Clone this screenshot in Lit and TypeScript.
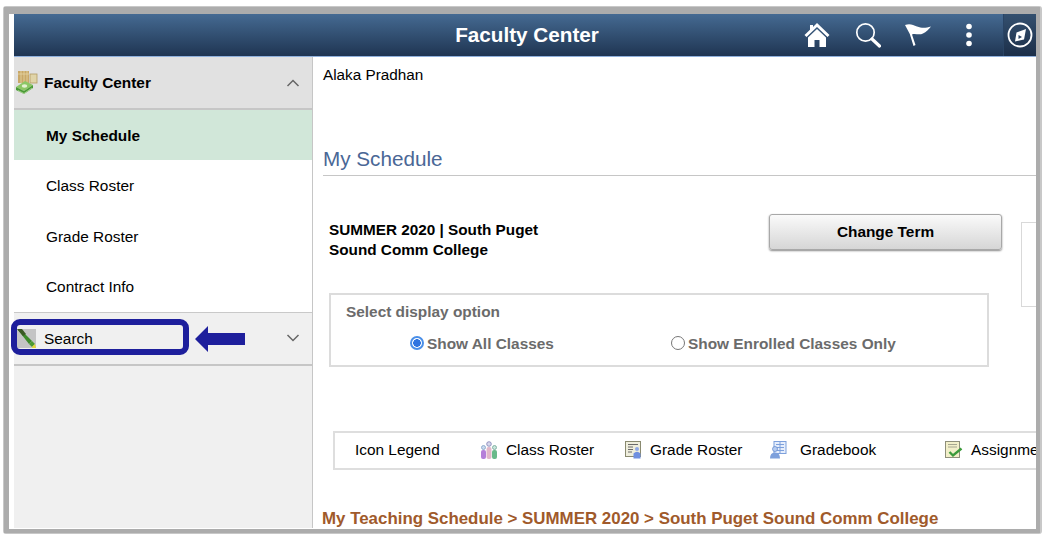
import { LitElement, html, css } from "lit";
import { customElement } from "lit/decorators.js";

const homeIcon = html`<svg width="26" height="26" viewBox="0 0 26 26"><path d="M13 1 L25.500 13 L23.500 15 L13 5 L2.500 15 L.5 13 L6 7.700 V3 H9 V5 Z" fill="#fff"/><path d="M13 7 L22 15.500 V25 H15.500 V18 H10.500 V25 H4 V15.500 Z" fill="#fff"/></svg>`;
const searchIcon = html`<svg width="26" height="26" viewBox="0 0 26 26" fill="none" stroke="#fff"><circle cx="10.500" cy="10.500" r="8.700" stroke-width="1.700"/><path d="M17 17 L24.500 24" stroke-width="3.200" stroke-linecap="round"/></svg>`;
const flagIcon = html`<svg width="26" height="24" viewBox="0 0 26 24"><path d="M0 2 C5 0 8 2 12 3.500 C17 5.500 21 5 26 3.500 C24 6 21 9 18 10.500 C14 12.500 10 10 7 11.500 L10.500 22 L8.500 23 L4.800 11 Z" fill="#fff"/></svg>`;
const dotsIcon = html`<svg width="8" height="24" viewBox="0 0 8 24" fill="#fff"><circle cx="4" cy="3.500" r="2.800"/><circle cx="4" cy="12" r="2.800"/><circle cx="4" cy="20.500" r="2.800"/></svg>`;
const navIcon = html`<svg width="26" height="26" viewBox="0 0 26 26"><circle cx="13" cy="13" r="11.500" fill="none" stroke="#fff" stroke-width="1.800"/><path d="M19 7 L17 17.500 L8 19.500 L9.500 10.500 Z" fill="#fff"/><path d="M11.500 13 L15 15 L11.500 17 Z" fill="#2b4464"/></svg>`;
const chevUp = html`<svg width="14" height="8" viewBox="0 0 14 8" fill="none" stroke="#666" stroke-width="1.500"><path d="M1.500 7 L7 1.500 L12.500 7"/></svg>`;
const chevDown = html`<svg width="14" height="8" viewBox="0 0 14 8" fill="none" stroke="#666" stroke-width="1.500"><path d="M1.500 1 L7 6.500 L12.500 1"/></svg>`;
const facultyIcon = html`<svg width="23" height="24" viewBox="0 0 23 24"><rect x="3" y="0" width="11" height="12" fill="#c9a868"/><path d="M3 3 H14 M6 0 V12 M9 0 V12 M12 0 V12" stroke="#e6d5a5" stroke-width=".8"/><rect x="15" y="3" width="7" height="9" fill="#e0d4a8" stroke="#b39c63" stroke-width=".8"/><path d="M1 16 L10 10 L18 14 L9 20 Z" fill="#8cc765"/><path d="M1 16 L9 20 L18 14 V17 L9 23 L1 19 Z" fill="#4a9a36"/><ellipse cx="9.500" cy="15" rx="2.800" ry="1.800" fill="#e4f2d2"/><path d="M3 19.500 L9 22.500 L17 17" stroke="#c8e6b0" fill="none" stroke-width=".7"/></svg>`;
const searchSideIcon = html`<svg width="20" height="19" viewBox="0 0 20 19"><rect width="19" height="19" fill="#c4c4c4"/><path d="M1 1 L3 0 L15 12 L12 15 Z" fill="#3d8a2a"/><path d="M0 0 L5 0 L9 5 L6 7 Z" fill="#3b5a24"/><path d="M12 15 L15 12 L18 15 L15 18 Z" fill="#4d9a30"/><path d="M15 18 L18 15 L19 19 H15 Z" fill="#e6d83a"/></svg>`;
const rosterIcon = html`<svg width="18" height="18" viewBox="0 0 18 18"><circle cx="9" cy="3" r="2.300" fill="#d8d8ec" stroke="#7f7fb5" stroke-width=".8"/><rect x="6.500" y="6" width="5" height="12" rx="2" fill="#e2b7c9"/><circle cx="3.500" cy="6.500" r="2" fill="#c9d9ee" stroke="#7f9fc5" stroke-width=".8"/><rect x="1" y="9" width="5" height="9" rx="2" fill="#b57fd9"/><circle cx="14.500" cy="6.500" r="2" fill="#c9e6dc" stroke="#6fa595" stroke-width=".8"/><rect x="12" y="9" width="5" height="9" rx="2" fill="#69b98a"/></svg>`;
const gradeIcon = html`<svg width="18" height="18" viewBox="0 0 18 18"><rect x=".5" y=".5" width="15" height="15" fill="#efeedd" stroke="#8a8a70"/><path d="M3 3.500 H13 M3 6 H8 M3 8.500 H8 M3 11 H7" stroke="#6a6a6a"/><circle cx="12" cy="8" r="2" fill="#8fa8e6"/><path d="M8.500 17.500 V12.500 Q12 9 15.500 12.500 V17.500 Z" fill="#6f8fe0"/></svg>`;
const bookIcon = html`<svg width="18" height="18" viewBox="0 0 18 18"><rect x="5" y=".5" width="12" height="12" fill="#e6eefc" stroke="#7da0dc"/><path d="M7 3.500 H15 M7 6.500 H15 M7 9.500 H15 M11 1 V12" stroke="#7da0dc"/><circle cx="6" cy="8" r="2.500" fill="#b7cdf2" stroke="#5f86cc" stroke-width=".7"/><path d="M1 17.500 Q1 11.500 6 11.500 Q11 11.500 11 17.500 Z" fill="#7da0dc"/></svg>`;
const assignIcon = html`<svg width="18" height="18" viewBox="0 0 18 18"><rect x=".5" y=".5" width="14" height="16" fill="#f2efc9" stroke="#8f8f7a"/><path d="M3 3.500 H12 M3 6 H12" stroke="#a6a690"/><path d="M4.500 11 L8 14.500 L16.500 7.500" fill="none" stroke="#3c9a3c" stroke-width="2.400"/></svg>`;

@customElement("app-root")
export class AppRoot extends LitElement {
  static styles = css`
    :host { display: block; width: 1050px; height: 540px; background: #fff; font-family: "Liberation Sans", Arial, sans-serif; color: #000; overflow: hidden; }
    * { box-sizing: border-box; }
    .outer { position: relative; margin: 6px 8px 6px 3px; height: 528px; border: 1px solid #c8c8c8; border-right-width: 2px; border-radius: 3px; background: #fff; }
    .frame { height: 100%; border-style: solid; border-color: #acacac; border-width: 7px 4px 4px 5px; background: #fff; padding: 0 0 1px 5px; display: flex; flex-direction: column; }
    .header { height: 42px; flex: none; background: linear-gradient(#456a92, #1f3552); display: grid; grid-template-columns: 1fr auto 1fr; align-items: center; }
    .title { grid-column: 2; color: #fff; font-size: 20.700px; font-weight: bold; padding-left: 4px; }
    .tools { grid-column: 3; justify-self: end; display: flex; align-items: center; height: 42px; }
    .tool { width: 50.500px; display: flex; justify-content: center; align-items: center; }
    .nav { width: 33px; height: 42px; margin-left: 9px; display: flex; justify-content: center; align-items: center; background: linear-gradient(#34506f, #1c2f49); border-left: 1px solid #2a4464; }
    .blue-line { height: 1px; flex: none; background: #8fb0dc; }
    .body { flex: 1; min-height: 0; display: flex; }
    .side { width: 299px; flex: none; background: #f0f0f0; border-right: 1px solid #c6c6c6; display: flex; flex-direction: column; }
    .group { height: 53px; display: flex; align-items: center; gap: 6px; padding: 0 12px 0 1px; background: #e1e1e1; border-bottom: 2px solid #c6c6c6; font-size: 15.400px; font-weight: bold; }
    .group .label { flex: 1; padding-top: 1px; }
    .group.search { height: 54px; background: #f0f0f0; border-top: 1px solid #c9c9c9; font-weight: normal; padding-left: 3px; gap: 7px; }
    .links { background: #fff; display: flex; flex-direction: column; }
    .link { height: 50.500px; display: flex; align-items: center; padding: 2px 0 0 32px; font-size: 15.400px; }
    .link.active { background: #d1e7d9; font-weight: bold; height: 50px; }
    .main { flex: 1; min-width: 0; background: #fff; overflow: hidden; padding: 9px 0 0 10px; }
    .name { font-size: 15.300px; line-height: 18px; }
    .h1 { margin: 63px 0 0; height: 29px; border-bottom: 1px solid #c6c6c6; color: #4a6796; font-size: 20.700px; font-weight: normal; line-height: 24px; }
    .term { display: flex; margin-top: 38px; height: 85px; }
    .term-text { width: 446px; padding: 6px 0 0 6px; font-size: 15.300px; font-weight: bold; line-height: 20px; flex: none; }
    .btn { width: 233px; height: 36px; border: 1px solid #a8a8a8; border-radius: 3px; background: linear-gradient(#fafafa, #d6d6d6); box-shadow: 0 1px 2px #8a8a8a; font: bold 15.400px "Liberation Sans", Arial, sans-serif; color: #000; padding: 0; flex: none; }
    .stub { width: 20px; height: 85px; flex: none; margin-left: 19px; margin-top: 8px; border: 1px solid #d9d9d9; border-right: none; }
    .options { margin: -6px 0 0 6px; width: 660px; height: 74px; border: 2px solid #dcdcdc; padding: 8px 0 0 15px; color: #6b6b6b; font-size: 15.400px; font-weight: bold; }
    .opt-title { line-height: 18px; }
    .opt-row { display: flex; margin-top: 14px; padding-left: 64px; line-height: 18px; }
    .opt { display: flex; align-items: center; gap: 3px; }
    .opt.first { width: 261px; }
    .radio { width: 14px; height: 14px; border-radius: 50%; border: 1px solid #777; background: #fff; flex: none; margin-top: -3px; }
    .radio.on { border: 2px solid #4a8fe8; background: radial-gradient(circle, #2f74e0 0 3.600px, #fff 4px); }
    .legend { margin: 64px 0 0 10px; width: 720px; height: 39px; border: 2px solid #dedede; border-right: none; display: flex; align-items: center; font-size: 15.400px; white-space: nowrap; padding-bottom: 1px; }
    .legend span { display: flex; align-items: center; flex: none; }
    .l0 { margin-left: 20px; width: 125px; }
    .l1 { width: 145px; gap: 8px; }
    .l2 { width: 144px; gap: 7px; }
    .l3 { width: 176px; gap: 13px; }
    .l4 { gap: 8px; }
    .crumb { margin-top: 39px; color: #a05a2b; font-size: 16.900px; font-weight: bold; line-height: 20px; white-space: nowrap; margin-left: -1px; }
    .mark { position: absolute; left: 7px; top: 312px; width: 178px; height: 36px; border: 6px solid #1e1f9c; border-radius: 9px; pointer-events: none; }
    .arrow { position: absolute; left: 190px; top: 318px; pointer-events: none; display: block; }
  `;

  render() {
    return html`
      <div class="outer">
        <div class="frame">
          <div class="header">
            <div class="title">Faculty Center</div>
            <div class="tools">
              <div class="tool">${homeIcon}</div>
              <div class="tool">${searchIcon}</div>
              <div class="tool">${flagIcon}</div>
              <div class="tool">${dotsIcon}</div>
              <div class="nav">${navIcon}</div>
            </div>
          </div>
          <div class="blue-line"></div>
          <div class="body">
            <aside class="side">
              <div class="group">${facultyIcon}<span class="label">Faculty Center</span>${chevUp}</div>
              <div class="links">
                <div class="link active">My Schedule</div>
                <div class="link">Class Roster</div>
                <div class="link">Grade Roster</div>
                <div class="link">Contract Info</div>
              </div>
              <div class="group search">${searchSideIcon}<span class="label">Search</span>${chevDown}</div>
            </aside>
            <main class="main">
              <div class="name">Alaka Pradhan</div>
              <h1 class="h1">My Schedule</h1>
              <div class="term">
                <div class="term-text">SUMMER 2020 | South Puget<br />Sound Comm College</div>
                <button class="btn">Change Term</button>
                <div class="stub"></div>
              </div>
              <div class="options">
                <div class="opt-title">Select display option</div>
                <div class="opt-row">
                  <label class="opt first"><i class="radio on"></i>Show All Classes</label>
                  <label class="opt"><i class="radio"></i>Show Enrolled Classes Only</label>
                </div>
              </div>
              <div class="legend">
                <span class="l0">Icon Legend</span>
                <span class="l1">${rosterIcon}Class Roster</span>
                <span class="l2">${gradeIcon}Grade Roster</span>
                <span class="l3">${bookIcon}Gradebook</span>
                <span class="l4">${assignIcon}Assignments</span>
              </div>
              <div class="crumb">My Teaching Schedule &gt; SUMMER 2020 &gt; South Puget Sound Comm College</div>
            </main>
          </div>
        </div>
        <div class="mark"></div>
        <svg class="arrow" width="52" height="28" viewBox="0 0 52 28"><path d="M1 14 L14 1 V8 H51 V20 H14 V27 Z" fill="#1e1f9c"/></svg>
      </div>
    `;
  }
}
